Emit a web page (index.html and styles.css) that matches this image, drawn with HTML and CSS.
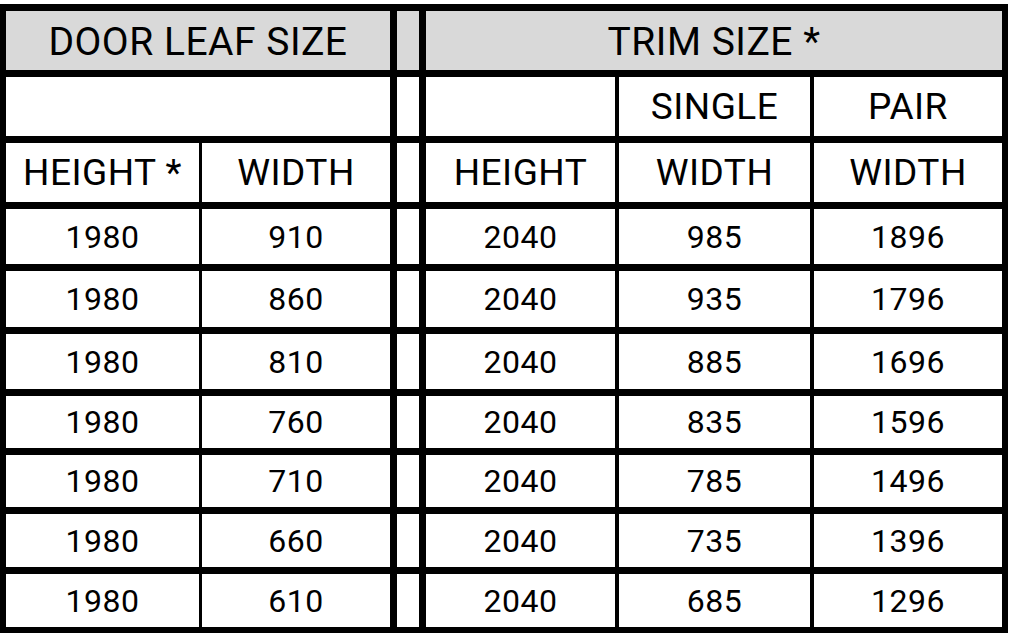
FILE: index.html
```html
<!DOCTYPE html>
<html lang="en">
<head>
<meta charset="utf-8">
<title>Door leaf and trim sizes</title>
<link rel="stylesheet" href="styles.css">
</head>
<body>
<div class="sheet">
  <div class="cell head span2">DOOR LEAF SIZE</div>
  <div class="cell head gap"></div>
  <div class="cell head span3 thick">TRIM SIZE *</div>

  <div class="cell span2 sub"></div>
  <div class="cell gap"></div>
  <div class="cell thick sub"></div>
  <div class="cell mid sub">SINGLE</div>
  <div class="cell mid sub">PAIR</div>

  <div class="cell sub">HEIGHT *</div>
  <div class="cell thin sub">WIDTH</div>
  <div class="cell gap"></div>
  <div class="cell thick sub">HEIGHT</div>
  <div class="cell mid sub">WIDTH</div>
  <div class="cell mid sub">WIDTH</div>

  <div class="cell">1980</div><div class="cell thin">910</div><div class="cell gap"></div><div class="cell thick">2040</div><div class="cell mid">985</div><div class="cell mid">1896</div>
  <div class="cell">1980</div><div class="cell thin">860</div><div class="cell gap"></div><div class="cell thick">2040</div><div class="cell mid">935</div><div class="cell mid">1796</div>
  <div class="cell">1980</div><div class="cell thin">810</div><div class="cell gap"></div><div class="cell thick">2040</div><div class="cell mid">885</div><div class="cell mid">1696</div>
  <div class="cell">1980</div><div class="cell thin">760</div><div class="cell gap"></div><div class="cell thick">2040</div><div class="cell mid">835</div><div class="cell mid">1596</div>
  <div class="cell">1980</div><div class="cell thin">710</div><div class="cell gap"></div><div class="cell thick">2040</div><div class="cell mid">785</div><div class="cell mid">1496</div>
  <div class="cell">1980</div><div class="cell thin">660</div><div class="cell gap"></div><div class="cell thick">2040</div><div class="cell mid">735</div><div class="cell mid">1396</div>
  <div class="cell">1980</div><div class="cell thin">610</div><div class="cell gap"></div><div class="cell thick">2040</div><div class="cell mid">685</div><div class="cell mid">1296</div>
</div>
</body>
</html>
```

FILE: styles.css
```css
html, body {
  margin: 0;
  padding: 0;
  background: #ffffff;
}

body {
  padding-top: 4px;
  font-family: "Roboto", "Open Sans", sans-serif;
  color: #000000;
}

.sheet {
  width: 996px;
  background: #000000;
  border-style: solid;
  border-color: #000000;
  border-width: 7px 6px 6px 6px;
  display: grid;
  grid-template-columns: 193px 191px 29px 196px 195px 192px;
  grid-template-rows: 59px 59px 59px 55px 56px 55px 52px 52px 53px 53px;
  row-gap: 7px;
}

.cell {
  background: #ffffff;
  display: flex;
  align-items: center;
  justify-content: center;
  font-size: 32px;
  letter-spacing: 0.5px;
  white-space: nowrap;
}

.head {
  background: #d9d9d9;
  font-size: 39px;
  letter-spacing: 0.5px;
  padding-top: 3px;
}

.sub {
  font-size: 37px;
  letter-spacing: 0.5px;
}

.span2 { grid-column: span 2; }
.span3 { grid-column: span 3; }

.thin { margin-left: 3px; }
.gap { margin-left: 7px; }
.thick { margin-left: 7px; }
.mid { margin-left: 4px; }
```
